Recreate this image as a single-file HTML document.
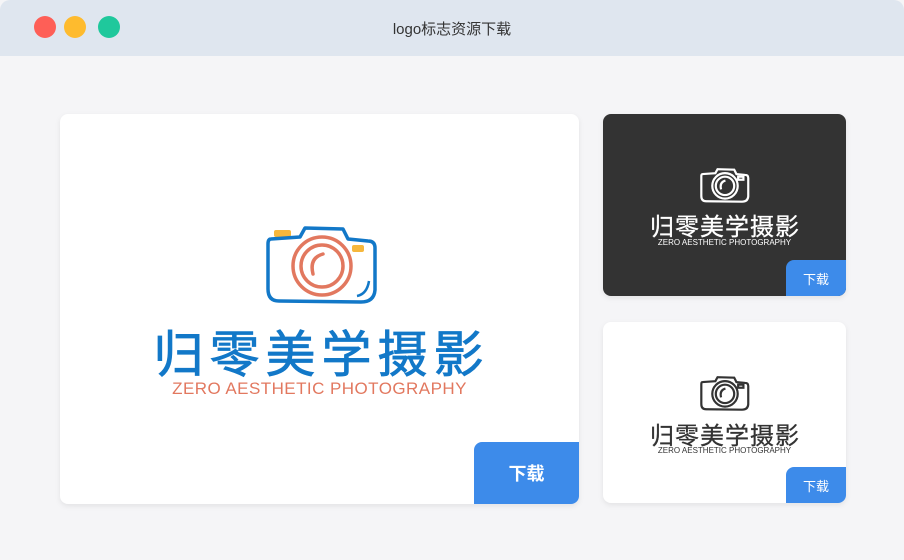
<!DOCTYPE html>
<html><head><meta charset="utf-8"><style>
*{margin:0;padding:0;box-sizing:border-box}
body{width:904px;height:560px;background:#f5f5f7;font-family:"Liberation Sans","Noto Sans CJK SC",sans-serif;position:relative;overflow:hidden}
.bar{position:absolute;left:0;top:0;width:904px;height:56px;background:#dfe6ef;border-radius:10px 10px 0 0}
.dot{position:absolute;top:16px;width:22px;height:22px;border-radius:50%}
.title{position:absolute;left:0;width:904px;top:18px;text-align:center;font-size:15px;color:#333}
.card{position:absolute;border-radius:8px;overflow:hidden;box-shadow:0 2px 6px rgba(0,0,0,.08)}
.btn{position:absolute;right:0;bottom:0;background:#3d8bea;color:#fff;display:flex;align-items:center;justify-content:center;border-radius:8px 0 0 0}
.cn{position:absolute;left:0;right:0;text-align:center;white-space:nowrap;line-height:1;font-family:"Noto Sans CJK SC",sans-serif;font-weight:normal}
.en{position:absolute;left:0;right:0;text-align:center;white-space:nowrap;line-height:1}
svg{position:absolute}
</style></head><body>
<div class="bar"></div>
<div class="dot" style="left:34px;background:#fe5f57"></div>
<div class="dot" style="left:64px;background:#febb2e"></div>
<div class="dot" style="left:98px;background:#1fc89c"></div>
<div class="title">logo标志资源下载</div>

<div class="card" style="left:60px;top:114px;width:519px;height:390px;background:#fff">
<svg style="left:205px;top:110px" width="114" height="80" viewBox="0 0 114 80">
<rect x="9" y="6" width="17" height="7" rx="2" fill="#f6b73c"/>
<rect x="87" y="21" width="12" height="7" rx="2" fill="#f6b73c"/>
<path d="M6 15 Q3 15 3 20 L3 65 Q3 77 14 77 L96 78 Q109 78 110 66 L110 24 Q110 17 103 17 L83 15 L78 5 L40 4 L35 13 Z" fill="none" stroke="#1278c8" stroke-width="3.5" stroke-linejoin="round"/>
<path d="M104 57 Q102 70 92 72" fill="none" stroke="#1278c8" stroke-width="2.5"/>
<circle cx="57" cy="42" r="29" fill="none" stroke="#e2785f" stroke-width="3.5"/>
<circle cx="57" cy="42" r="21" fill="none" stroke="#e2785f" stroke-width="3.5"/>
<path d="M48 50 Q44 34 58 30" fill="none" stroke="#e2785f" stroke-width="3.5" stroke-linecap="round"/>
</svg>
<div class="cn" style="top:212px;font-size:50px;letter-spacing:6px;color:#1278c8;padding-left:4px;-webkit-text-stroke:0.8px #1278c8">归零美学摄影</div>
<div class="en" style="top:266px;font-size:17px;letter-spacing:0.45px;color:#e2785f">ZERO AESTHETIC PHOTOGRAPHY</div>
<div class="btn" style="width:105px;height:62px;font-size:18px;font-weight:bold">下载</div>
</div>

<div class="card" style="left:603px;top:114px;width:243px;height:182px;background:#333">
<svg style="left:97px;top:53px" width="50" height="36" viewBox="0 0 114 80"><g fill="none" stroke="#fff" stroke-width="5">
<path d="M6 15 Q3 15 3 20 L3 65 Q3 77 14 77 L96 78 Q109 78 110 66 L110 24 Q110 17 103 17 L83 15 L78 5 L40 4 L35 13 Z"/>
<circle cx="57" cy="42" r="29"/><circle cx="57" cy="42" r="21"/><path d="M48 50 Q44 34 58 30"/><rect x="87" y="21" width="12" height="7"/></g></svg>
<div class="cn" style="top:99px;font-size:24px;letter-spacing:1px;padding-left:1px;color:#fff;-webkit-text-stroke:0.3px #fff">归零美学摄影</div>
<div class="en" style="top:125px;font-size:8px;color:#fff">ZERO AESTHETIC PHOTOGRAPHY</div>
<div class="btn" style="width:60px;height:36px;font-size:13px">下载</div>
</div>

<div class="card" style="left:603px;top:322px;width:243px;height:181px;background:#fff">
<svg style="left:97px;top:53px" width="50" height="36" viewBox="0 0 114 80"><g fill="none" stroke="#333" stroke-width="5">
<path d="M6 15 Q3 15 3 20 L3 65 Q3 77 14 77 L96 78 Q109 78 110 66 L110 24 Q110 17 103 17 L83 15 L78 5 L40 4 L35 13 Z"/>
<circle cx="57" cy="42" r="29"/><circle cx="57" cy="42" r="21"/><path d="M48 50 Q44 34 58 30"/><rect x="87" y="21" width="12" height="7"/></g></svg>
<div class="cn" style="top:100px;font-size:24px;letter-spacing:1px;padding-left:1px;color:#333;-webkit-text-stroke:0.3px #333">归零美学摄影</div>
<div class="en" style="top:125px;font-size:8px;color:#333">ZERO AESTHETIC PHOTOGRAPHY</div>
<div class="btn" style="width:60px;height:36px;font-size:13px">下载</div>
</div>
</body></html>
